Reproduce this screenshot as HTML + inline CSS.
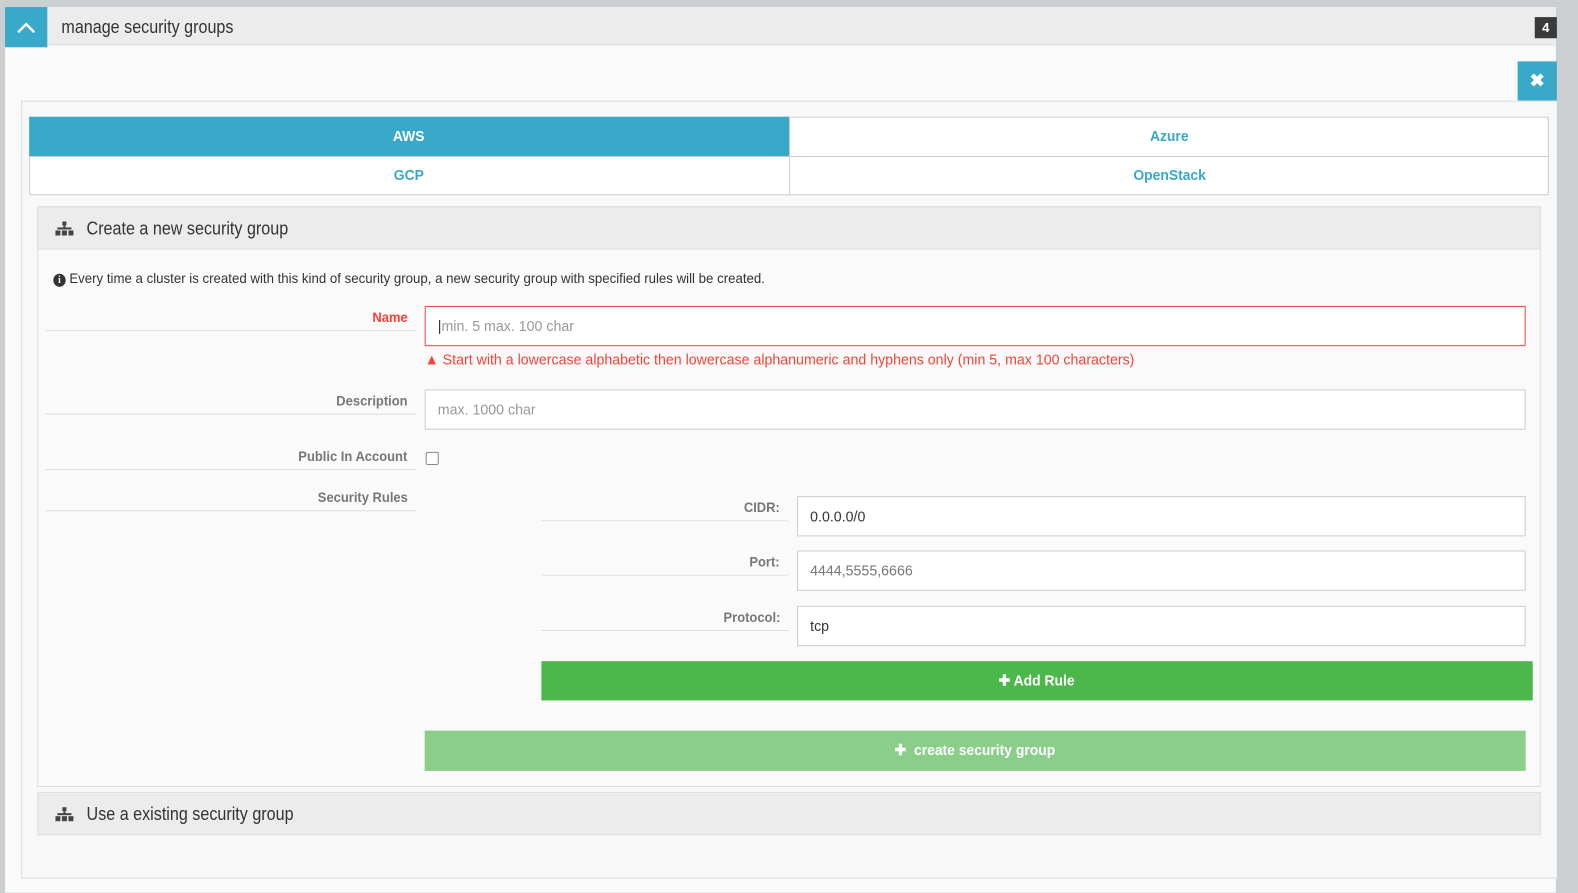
<!DOCTYPE html>
<html><head><meta charset="utf-8"><style>
*{box-sizing:border-box;margin:0;padding:0}
body{width:1578px;height:887px;background:#cbcfd1;overflow:hidden;font-family:"Liberation Sans Narrow","Liberation Sans",sans-serif;color:#333}
#w{position:relative;width:1568px;height:881px;transform:scale(1.00638);transform-origin:0 0}
.a{position:absolute}
.l{display:inline-block;transform:scaleX(.94);transform-origin:0 50%;white-space:nowrap}
.h{display:inline-block;transform:scaleX(.89);transform-origin:0 50%;white-space:nowrap}
.r{display:inline-block;transform:scaleX(.92);transform-origin:100% 50%;white-space:nowrap}
.c{display:inline-block;transform:scaleX(.92);transform-origin:50% 50%;white-space:nowrap}
.lbl{position:absolute;text-align:right;font-weight:bold;font-size:14px;color:#777;border-bottom:1px solid #ddd;padding-right:9px;padding-top:2px;height:24px}
.inp{position:absolute;background:#fff;border:1px solid #ccc;font-size:15px;padding:0 12px;display:flex;align-items:center;color:#999}
</style></head><body><div id="w">
<div class="a" style="left:5px;top:7px;width:1541px;height:880px;background:#fafafa"></div>
<div class="a" style="left:5px;top:7px;width:1541px;height:38px;background:#ececec;border-bottom:1px solid #ddd"></div>
<div class="a" style="left:5px;top:7px;width:42px;height:40px;background:#38a9c8"><svg width="42" height="40"><path d="M13 25 L21 17 L29 25" stroke="#fff" stroke-width="2.5" fill="none"/></svg></div>
<div class="a" style="left:61px;top:17px;font-size:18px;color:#333"><span class="h">manage security groups</span></div>
<div class="a" style="top:17px;width:22px;height:21px;background:#3a3a3a;color:#fff;font-weight:bold;font-size:13px;text-align:center;line-height:21px;left:1525px">4</div>
<div class="a" style="left:1508px;top:61px;width:39px;height:39px;background:#38a9c8;color:#fff;font-weight:bold;font-size:18px;text-align:center;line-height:38px">✖</div>
<div class="a" style="left:21px;top:100px;width:1526px;height:773px;border:1px solid #ddd;border-right:none;background:#f8f8f8"></div>
<div class="a" style="left:29px;top:116px;width:1510px;height:78px;border:1px solid #ccc;background:#fff"></div>
<div class="a" style="left:29px;top:116px;width:755px;height:39px;background:#38a9c8;color:#fff;font-weight:bold;font-size:15px;text-align:center;line-height:39px"><span class="c">AWS</span></div>
<div class="a" style="left:784px;top:116px;width:755px;height:39px;border-left:1px solid #ccc;color:#38a9c8;font-weight:bold;font-size:15px;text-align:center;line-height:39px"><span class="c">Azure</span></div>
<div class="a" style="left:29px;top:155px;width:1510px;height:1px;background:#ccc"></div>
<div class="a" style="left:29px;top:155px;width:755px;height:39px;color:#38a9c8;font-weight:bold;font-size:15px;text-align:center;line-height:39px"><span class="c">GCP</span></div>
<div class="a" style="left:784px;top:155px;width:755px;height:39px;border-left:1px solid #ccc;color:#38a9c8;font-weight:bold;font-size:15px;text-align:center;line-height:39px"><span class="c">OpenStack</span></div>
<div class="a" style="left:37px;top:205px;width:1494px;height:577px;border:1px solid #ddd;background:#fafafa"></div>
<div class="a" style="left:37px;top:205px;width:1494px;height:43px;background:#ececec;border:1px solid #ddd"></div>
<svg class="a" style="left:55px;top:220px" width="18" height="15"><rect x="7" y="0" width="4" height="4" fill="#444"/><rect x="2" y="6" width="14" height="2" fill="#444"/><rect x="8" y="4" width="2" height="3" fill="#444"/><rect x="0" y="9" width="5" height="5" fill="#444"/><rect x="6.5" y="9" width="5" height="5" fill="#444"/><rect x="13" y="9" width="5" height="5" fill="#444"/></svg>
<div class="a" style="left:86px;top:217px;font-size:18px;color:#333"><span class="h">Create a new security group</span></div>
<div class="a" style="left:53px;top:268px;font-size:14px;color:#333"><span class="l"><span style="display:inline-block;width:13px;height:13px;border-radius:50%;background:#333;color:#fff;font-size:10px;text-align:center;line-height:13px;font-weight:bold;font-family:'Liberation Serif',serif">i</span> Every time a cluster is created with this kind of security group, a new security group with specified rules will be created.</span></div>
<div class="lbl" style="left:45px;top:305px;width:369px;color:#f44336"><span class="r">Name</span></div>
<div class="inp" style="left:422px;top:304px;width:1094px;height:40px;border-color:#f44336"><span class="l"><span style="color:#333">|</span>min. 5 max. 100 char</span></div>
<div class="a" style="left:422px;top:349px;font-size:15px;color:#f44336"><span class="l">▲ Start with a lowercase alphabetic then lowercase alphanumeric and hyphens only (min 5, max 100 characters)</span></div>
<div class="lbl" style="left:45px;top:388px;width:369px"><span class="r">Description</span></div>
<div class="inp" style="left:422px;top:387px;width:1094px;height:40px"><span class="l">max. 1000 char</span></div>
<div class="lbl" style="left:45px;top:443px;width:369px"><span class="r">Public In Account</span></div>
<div class="a" style="left:423px;top:449px;width:13px;height:13px;border:1px solid #888;border-radius:2px;background:#fff"></div>
<div class="lbl" style="left:45px;top:484px;width:369px"><span class="r">Security Rules</span></div>
<div class="lbl" style="left:538px;top:494px;width:246px"><span class="r">CIDR:</span></div>
<div class="inp" style="left:792px;top:493px;width:724px;height:40px;color:#333"><span class="l">0.0.0.0/0</span></div>
<div class="lbl" style="left:538px;top:548px;width:246px"><span class="r">Port:</span></div>
<div class="inp" style="left:792px;top:547px;width:724px;height:40px;color:#777"><span class="l">4444,5555,6666</span></div>
<div class="lbl" style="left:538px;top:603px;width:246px"><span class="r">Protocol:</span></div>
<div class="inp" style="left:792px;top:602px;width:724px;height:40px;color:#333"><span class="l">tcp</span></div>
<div class="a" style="left:538px;top:657px;width:985px;height:39px;background:#4cb84c;color:#fff;font-weight:bold;font-size:15px;text-align:center;line-height:39px"><span class="c">✚ Add Rule</span></div>
<div class="a" style="left:422px;top:726px;width:1094px;height:40px;background:#8ace8a;color:#fff;font-weight:bold;font-size:15px;text-align:center;line-height:40px"><span class="c">✚ &nbsp;create security group</span></div>
<div class="a" style="left:37px;top:787px;width:1494px;height:43px;background:#ececec;border:1px solid #ddd"></div>
<svg class="a" style="left:55px;top:802px" width="18" height="15"><rect x="7" y="0" width="4" height="4" fill="#444"/><rect x="2" y="6" width="14" height="2" fill="#444"/><rect x="8" y="4" width="2" height="3" fill="#444"/><rect x="0" y="9" width="5" height="5" fill="#444"/><rect x="6.5" y="9" width="5" height="5" fill="#444"/><rect x="13" y="9" width="5" height="5" fill="#444"/></svg>
<div class="a" style="left:86px;top:799px;font-size:18px;color:#333"><span class="h">Use a existing security group</span></div>
</div></body></html>
